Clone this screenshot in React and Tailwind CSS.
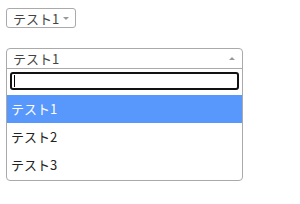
import React from 'react';

const font = { fontFamily: '"Noto Sans CJK JP", "Noto Sans", sans-serif' };

function Caret({ up }) {
  return (
    <svg width="6" height="3" viewBox="0 0 6 3" className="shrink-0">
      {up ? <polygon points="0,3 6,3 3,0" fill="#999" /> : <polygon points="0,0 6,0 3,3" fill="#999" />}
    </svg>
  );
}

export default function App() {
  const options = ['テスト1', 'テスト2', 'テスト3'];

  return (
    <div className="w-[300px] h-[204px] bg-white pl-[6px] pt-[8px] text-[13px] text-[#444]" style={font}>
      <div className="flex">
        <div className="h-[20px] border border-[#aaa] rounded-[3px] flex items-center whitespace-nowrap pl-[6px] pr-[6px] gap-[4px]">
          <span className="leading-none">テスト1</span>
          <Caret />
        </div>
      </div>

      <div className="mt-[20px] w-[237px] border border-[#aaa] rounded-[4px]">
        <div className="h-[20px] border-b border-[#aaa] flex items-center pl-[6px] pr-[7px] justify-between">
          <span className="leading-none">テスト1</span>
          <Caret up />
        </div>
        <div className="pt-[3px] pb-[5px] px-[3px]">
          <div className="h-[18px] border-2 border-[#111] rounded-[3px] flex items-center pl-[2px]">
            <div className="w-[1px] h-[12px] bg-black" />
          </div>
        </div>
        <div className="pb-[1px]">
          {options.map((o, i) => (
            <div
              key={o}
              className={
                'h-[28px] flex items-center pl-[4px] text-[13px] ' +
                (i === 0 ? 'bg-[#5897fb] text-white' : 'text-[#222]')
              }
            >
              {o}
            </div>
          ))}
        </div>
      </div>
    </div>
  );
}
